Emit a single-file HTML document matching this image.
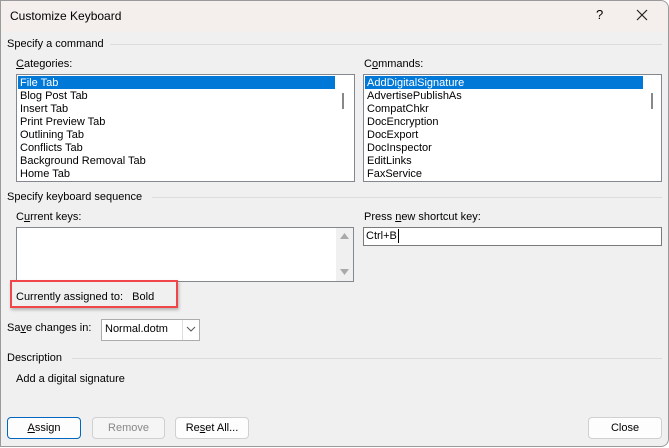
<!DOCTYPE html>
<html><head><style>
*{margin:0;padding:0;box-sizing:border-box}
body{width:669px;height:448px;overflow:hidden;background:#fff;font-family:"Liberation Sans",sans-serif;font-size:11px;color:#000;position:relative}
.win{position:absolute;left:0;top:0;width:669px;height:447px;background:#f0f0f0;border:1px solid #9a9a9a;border-radius:0 8px 8px 0}
.title{position:absolute;left:0;top:0;width:667px;height:31px;background:#f4eeed;border-radius:0 8px 0 0}
.a{position:absolute;white-space:nowrap;line-height:13px}
.box{position:absolute;background:#fff;border:1px solid #828790}
.sel{position:absolute;background:#0078d7;height:13px}
.grp{position:absolute;height:1px;background:#dcdcdc}
.btn{position:absolute;top:417px;height:22px;background:#fdfdfd;border:1px solid #d0d0d0;border-radius:4px;text-align:center;line-height:20px}
u{text-decoration:underline}
</style></head><body>
<div class="win">
<div class="title"></div>
</div>
<div class="a" style="left:10px;top:9px;font-size:12px;line-height:14px">Customize Keyboard</div>
<div class="a" style="left:596px;top:8px;font-size:13px">?</div>
<svg style="position:absolute;left:636px;top:9px" width="12" height="12"><path d="M1 1L11 11M11 1L1 11" stroke="#222" stroke-width="1.2"/></svg>

<div class="a" style="left:7px;top:38px">Specify a command</div>
<div class="grp" style="left:110px;top:44px;width:552px"></div>
<div class="a" style="left:16px;top:58px"><u>C</u>ategories:</div>
<div class="box" style="left:16px;top:74px;width:339px;height:108px"></div>
<div class="sel" style="left:18px;top:76px;width:317px"></div>
<div style="position:absolute;left:342px;top:93px;width:2px;height:16px;background:#888"></div>
<div class="a" style="left:20px;top:77px;color:#fff">File Tab</div>
<div class="a" style="left:20px;top:90px">Blog Post Tab</div>
<div class="a" style="left:20px;top:103px">Insert Tab</div>
<div class="a" style="left:20px;top:116px">Print Preview Tab</div>
<div class="a" style="left:20px;top:129px">Outlining Tab</div>
<div class="a" style="left:20px;top:142px">Conflicts Tab</div>
<div class="a" style="left:20px;top:155px">Background Removal Tab</div>
<div class="a" style="left:20px;top:168px">Home Tab</div>

<div class="a" style="left:364px;top:58px">C<u>o</u>mmands:</div>
<div class="box" style="left:363px;top:74px;width:299px;height:108px"></div>
<div class="sel" style="left:365px;top:76px;width:278px"></div>
<div style="position:absolute;left:651px;top:93px;width:2px;height:16px;background:#888"></div>
<div class="a" style="left:367px;top:77px;color:#fff">AddDigitalSignature</div>
<div class="a" style="left:367px;top:90px">AdvertisePublishAs</div>
<div class="a" style="left:367px;top:103px">CompatChkr</div>
<div class="a" style="left:367px;top:116px">DocEncryption</div>
<div class="a" style="left:367px;top:129px">DocExport</div>
<div class="a" style="left:367px;top:142px">DocInspector</div>
<div class="a" style="left:367px;top:155px">EditLinks</div>
<div class="a" style="left:367px;top:168px">FaxService</div>

<div class="a" style="left:7px;top:191px">Specify keyboard sequence</div>
<div class="grp" style="left:152px;top:197px;width:510px"></div>
<div class="a" style="left:16px;top:211px">C<u>u</u>rrent keys:</div>
<div class="box" style="left:16px;top:227px;width:338px;height:55px"></div>
<div style="position:absolute;left:336px;top:228px;width:17px;height:53px;background:#f0f0f0"></div>
<svg style="position:absolute;left:339px;top:232px" width="11" height="8"><path d="M1 7L5.5 1L10 7Z" fill="#aaa"/></svg>
<svg style="position:absolute;left:339px;top:268px" width="11" height="8"><path d="M1 1L5.5 7L10 1Z" fill="#aaa"/></svg>
<div class="a" style="left:364px;top:211px">Press <u>n</u>ew shortcut key:</div>
<div class="box" style="left:363px;top:227px;width:299px;height:19px;border-color:#7a7a7a"></div>
<div class="a" style="left:366px;top:230px">Ctrl+B</div>
<div style="position:absolute;left:398px;top:229px;width:1px;height:14px;background:#000"></div>

<div style="position:absolute;left:10px;top:280px;width:168px;height:28px;border:2px solid #f0464a;box-shadow:1px 2px 3px rgba(0,0,0,.25)"></div>
<div class="a" style="left:16px;top:291px">Currently assigned to:&nbsp;&nbsp;&nbsp;Bold</div>

<div class="a" style="left:7px;top:322px">Sa<u>v</u>e changes in:</div>
<div class="box" style="left:101px;top:319px;width:99px;height:22px;border-color:#acacac"></div>
<div class="a" style="left:105px;top:323px">Normal.dotm</div>
<div style="position:absolute;left:182px;top:320px;width:1px;height:20px;background:#ddd"></div>
<svg style="position:absolute;left:186px;top:326px" width="10" height="6"><path d="M1 1L5 5L9 1" stroke="#555" fill="none"/></svg>

<div class="a" style="left:7px;top:352px">Description</div>
<div class="grp" style="left:72px;top:358px;width:590px"></div>
<div class="a" style="left:16px;top:373px">Add a digital signature</div>

<div class="btn" style="left:7px;width:74px;border-color:#0067c0"><u>A</u>ssign</div>
<div class="btn" style="left:92px;width:73px;color:#888;background:#f5f5f5">Remove</div>
<div class="btn" style="left:175px;width:74px">Re<u>s</u>et All...</div>
<div class="btn" style="left:588px;width:74px">Close</div>
</body></html>
